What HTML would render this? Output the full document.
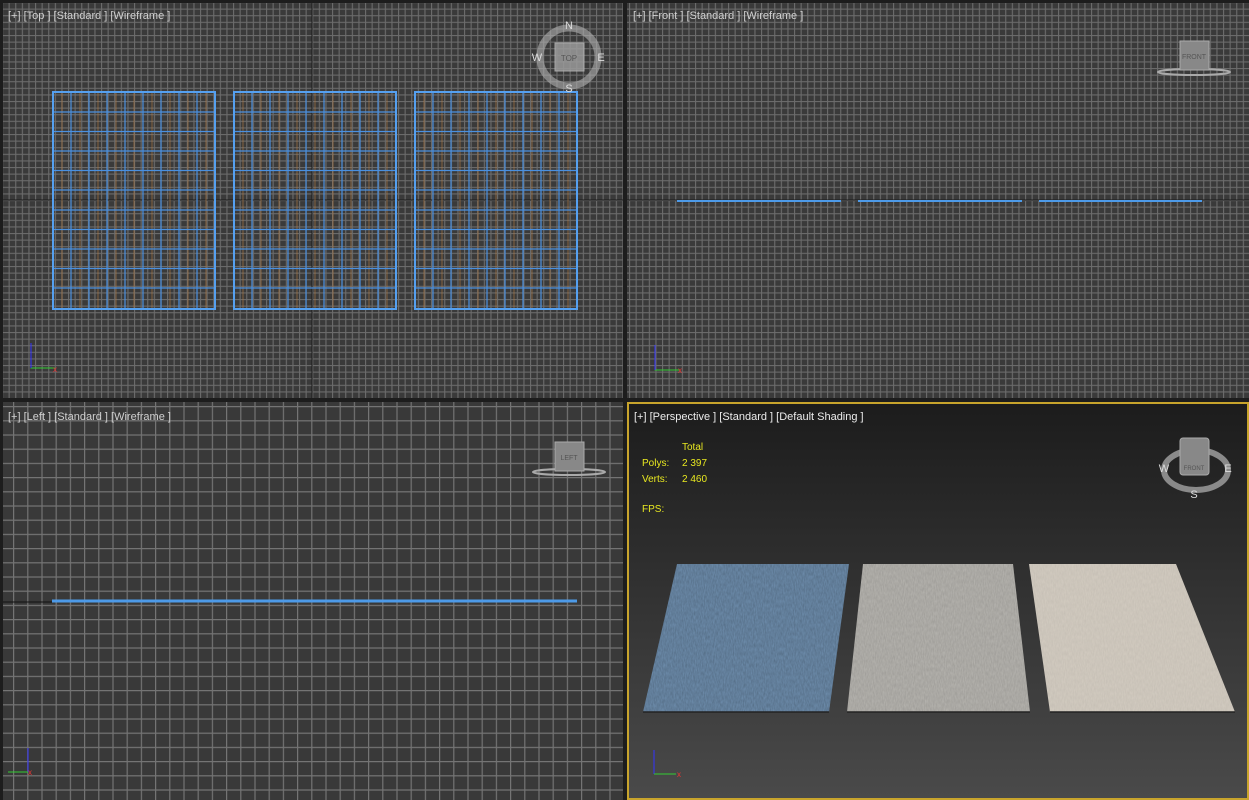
<!DOCTYPE html>
<html><head><style>
html,body{margin:0;padding:0;background:#1d1d1d;width:1249px;height:800px;overflow:hidden}
svg{display:block}
text{font-family:"Liberation Sans",sans-serif}
</style></head><body>
<svg width="1249" height="800" xmlns="http://www.w3.org/2000/svg">
<defs>
<pattern id="fg" width="6.6" height="6.6" patternUnits="userSpaceOnUse" x="2" y="2">
<rect width="6.6" height="6.6" fill="#3a3a3a"/>
<path d="M0 0.5H6.6M0.5 0V6.6" stroke="#6c6c6c" stroke-width="1.2"/>
</pattern>
<pattern id="cg" width="14.2" height="14.2" patternUnits="userSpaceOnUse" x="13" y="406">
<rect width="14.2" height="14.2" fill="#393939"/>
<path d="M0 0.5H14.2M0.5 0V14.2" stroke="#747474" stroke-width="1.4"/>
</pattern>
<linearGradient id="pg" x1="0" y1="0" x2="0" y2="1">
<stop offset="0" stop-color="#1c1c1c"/><stop offset="1" stop-color="#4a4a4a"/>
</linearGradient>
<filter id="noise" x="0" y="0" width="100%" height="100%">
<feTurbulence type="fractalNoise" baseFrequency="0.9 0.25" numOctaves="2" seed="3"/>
<feColorMatrix type="matrix" values="0 0 0 0 0  0 0 0 0 0  0 0 0 0 0  0 0 0 0.5 0"/>
<feComposite in2="SourceGraphic" operator="in"/>
</filter>
<g id="rugw">
<g stroke="#b07840" stroke-width="0.8" opacity="0.8">
<path d="M9 0V217M27 0V217M45 0V217M63 0V217M81 0V217M99 0V217M117 0V217M135 0V217M153 0V217"/>
</g>
<g stroke="#4a90e0" stroke-width="1.2">
<path d="M18 0V217M36 0V217M54 0V217M72 0V217M90 0V217M108 0V217M126 0V217M144 0V217"/>
<path d="M0 20H162M0 39.5H162M0 59H162M0 78.5H162M0 98H162M0 118H162M0 137.5H162M0 157H162M0 176.5H162M0 196H162"/>
</g>
<rect x="0" y="0" width="162" height="217" fill="none" stroke="#55a0f0" stroke-width="2"/>
</g>
</defs>
<rect x="3" y="3" width="620" height="395" fill="url(#fg)"/>
<line x1="3" y1="200" x2="623" y2="200" stroke="#1a1a1a" stroke-width="1"/>
<line x1="312" y1="3" x2="312" y2="398" stroke="#1a1a1a" stroke-width="1"/>
<use href="#rugw" x="53" y="92"/>
<use href="#rugw" x="234" y="92"/>
<use href="#rugw" x="415" y="92"/>
<text x="8" y="19" font-size="11" fill="#d0d0d0">[+] [Top ] [Standard ] [Wireframe ]</text>
<circle cx="569" cy="57" r="29" fill="none" stroke="#b0b0b0" stroke-width="7" opacity="0.6"/>
<rect x="555" y="43" width="29" height="28" fill="#9a9a9a" stroke="#bbb" opacity="0.85"/>
<text x="569" y="61" font-size="8" fill="#555" text-anchor="middle">TOP</text>
<text x="569" y="29" font-size="11" fill="#ddd" text-anchor="middle">N</text>
<text x="569" y="92" font-size="11" fill="#ddd" text-anchor="middle">S</text>
<text x="537" y="61" font-size="11" fill="#ddd" text-anchor="middle">W</text>
<text x="601" y="61" font-size="11" fill="#ddd" text-anchor="middle">E</text>
<path d="M31 343V368H55" fill="none" stroke="#3c3"/><path d="M31 343V368" stroke="#33f" />
<text x="53" y="372" font-size="8" fill="#e33">x</text>
<rect x="627" y="3" width="622" height="395" fill="url(#fg)"/>
<line x1="627" y1="200" x2="1249" y2="200" stroke="#1a1a1a"/>
<path d="M677 201H841M858 201H1022M1039 201H1202" stroke="#4d9ae8" stroke-width="2"/>
<text x="633" y="19" font-size="11" fill="#d0d0d0">[+] [Front ] [Standard ] [Wireframe ]</text>
<ellipse cx="1194" cy="72" rx="36" ry="3" fill="none" stroke="#aaa" stroke-width="2"/>
<rect x="1180" y="41" width="29" height="29" fill="#888" stroke="#aaa"/>
<text x="1194" y="59" font-size="7" fill="#555" text-anchor="middle">FRONT</text>
<path d="M655 345V370H680" fill="none" stroke="#3c3"/><path d="M655 345V370" stroke="#33f"/>
<text x="678" y="373" font-size="8" fill="#e33">x</text>
<rect x="3" y="402" width="620" height="398" fill="url(#cg)"/>
<line x1="3" y1="602" x2="52" y2="602" stroke="#111"/>
<line x1="52" y1="601" x2="577" y2="601" stroke="#4d9ae8" stroke-width="3"/>
<text x="8" y="420" font-size="11" fill="#d0d0d0">[+] [Left ] [Standard ] [Wireframe ]</text>
<ellipse cx="569" cy="472" rx="36" ry="3" fill="none" stroke="#aaa" stroke-width="2"/>
<rect x="555" y="442" width="29" height="29" fill="#888" stroke="#aaa"/>
<text x="569" y="460" font-size="7" fill="#555" text-anchor="middle">LEFT</text>
<path d="M28 748V772" stroke="#33f"/><path d="M8 772H28" stroke="#3c3"/>
<text x="28" y="775" font-size="8" fill="#e33">x</text>
<rect x="628" y="403" width="620" height="396" fill="url(#pg)" stroke="#c8a42c" stroke-width="2"/>
<text x="634" y="420" font-size="11" fill="#ececec">[+] [Perspective ] [Standard ] [Default Shading ]</text>
<g font-size="10" fill="#e8e820">
<text x="682" y="450">Total</text>
<text x="642" y="466">Polys:</text><text x="682" y="466">2 397</text>
<text x="642" y="482">Verts:</text><text x="682" y="482">2 460</text>
<text x="642" y="512">FPS:</text>
</g>
<ellipse cx="1196" cy="470" rx="32" ry="20" fill="none" stroke="#8a8a8a" stroke-width="6"/>
<rect x="1180" y="438" width="29" height="37" rx="3" fill="#888" stroke="#aaa"/>
<text x="1194" y="470" font-size="6" fill="#555" text-anchor="middle">FRONT</text>
<text x="1164" y="472" font-size="11" fill="#ddd" text-anchor="middle">W</text>
<text x="1228" y="472" font-size="11" fill="#ddd" text-anchor="middle">E</text>
<text x="1194" y="498" font-size="11" fill="#ddd" text-anchor="middle">S</text>
<polygon points="677,564 849,564 829,712 643,712" fill="#7090b0"/>
<polygon points="677,564 849,564 829,712 643,712" fill="#000" filter="url(#noise)" opacity="0.5"/>
<polygon points="863,564 1013,564 1030,712 847,712" fill="#b8b6b1"/>
<polygon points="863,564 1013,564 1030,712 847,712" fill="#000" filter="url(#noise)" opacity="0.3"/>
<polygon points="1029,564 1176,564 1235,712 1050,712" fill="#d4cdc2"/>
<polygon points="1029,564 1176,564 1235,712 1050,712" fill="#000" filter="url(#noise)" opacity="0.15"/>
<path d="M643 712H829M847 712H1030M1050 712H1235" stroke="#222" stroke-width="1.5"/>
<path d="M654 750V774" stroke="#33f"/><path d="M654 774H676" stroke="#3c3"/>
<text x="677" y="777" font-size="8" fill="#e33">x</text>
</svg>
</body></html>
